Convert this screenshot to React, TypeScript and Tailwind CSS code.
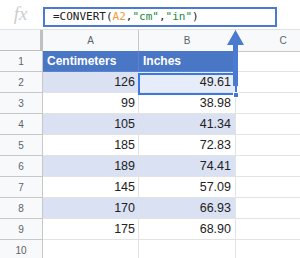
import React from "react";

const rows: [string, string][] = [
  ["126", "49.61"],
  ["99", "38.98"],
  ["105", "41.34"],
  ["185", "72.83"],
  ["189", "74.41"],
  ["145", "57.09"],
  ["170", "66.93"],
  ["175", "68.90"],
];

function RowHead({n}: { n: number | string }) {
  return (
    <div className="flex items-center justify-center bg-[#f8f9fa] border-r border-b border-[#c7c7c7] text-[10px] text-[#5f6368]">
      {n}
    </div>
  );
}

export default function App() {
  return (
    <div className="relative w-[300px] h-[258px] overflow-hidden bg-white" style={{fontFamily: '"Liberation Sans", Arial, sans-serif'}}>
      {/* formula bar */}
      <div className="flex h-[30px] border-b border-[#e0e0e0]">
        <div className="w-[43px] shrink-0 flex items-center justify-center">
          <span className="italic text-[19px] text-[#cdcdcd] pr-[2px]" style={{fontFamily: '"Liberation Serif", serif'}}>fx</span>
        </div>
        <div className="mt-[7px] h-[20px] w-[234px] shrink-0 border-2 border-[#4a7bd0] flex items-center pl-[8px] text-[11px] text-[#222]" style={{fontFamily: '"DejaVu Sans Mono", monospace'}}>
          <span>=CONVERT(</span>
          <span className="text-[#f09c3a]">A2</span>
          <span>,</span>
          <span className="text-[#168a3a]">"cm"</span>
          <span>,</span>
          <span className="text-[#168a3a]">"in"</span>
          <span>)</span>
        </div>
      </div>

      {/* sheet */}
      <div className="grid w-[330px] grid-cols-[43px_96px_97px_94px] auto-rows-[21px] text-[#222]">
        <div className="h-[22px] bg-[#f8f9fa] border-r-[3px] border-b-[2px] border-[#c0c0c0]" />
        <div className="h-[22px] flex items-center justify-center bg-[#f8f9fa] border-r border-b border-[#c7c7c7] text-[10px] text-[#5f6368]">A</div>
        <div className="h-[22px] flex items-center justify-center bg-[#f8f9fa] border-r border-b border-[#c7c7c7] text-[10px] text-[#5f6368]">B</div>
        <div className="h-[22px] flex items-center justify-center bg-[#f8f9fa] border-b border-[#c7c7c7] text-[10px] text-[#5f6368]">C</div>

        <RowHead n={1} />
        <div className="flex items-center pl-[4px] bg-[#4a76c6] border-r border-b border-[#5b84cc] text-white font-bold text-[12px]">Centimeters</div>
        <div className="flex items-center pl-[4px] bg-[#4a76c6] border-r border-b border-[#5b84cc] text-white font-bold text-[12px]">Inches</div>
        <div className="border-b border-[#e2e3e3]" />

        {rows.map(([a, b], i) => {
          const band = i % 2 === 0 ? "bg-[#d9e1f2]" : "bg-white";
          const bBand = i === 0 ? "bg-[#e6ecf8]" : band;
          return (
            <React.Fragment key={i}>
              <RowHead n={i + 2} />
              <div className={`flex items-center justify-end pr-[3px] text-[12.5px] border-r border-b border-[#e2e3e3] ${band}`}>{a}</div>
              <div className={`flex items-center justify-end pr-[4px] text-[12.5px] border-r border-b border-[#e2e3e3] ${bBand}`}>{b}</div>
              <div className="border-b border-[#e2e3e3]" />
            </React.Fragment>
          );
        })}

        <RowHead n={10} />
        <div className="border-r border-b border-[#e2e3e3]" />
        <div className="border-r border-b border-[#e2e3e3]" />
        <div className="border-b border-[#e2e3e3]" />
      </div>

      {/* selection on B2 */}
      <div className="absolute left-[138px] top-[73px] w-[99px] h-[22px] border-2 border-[#3b78e7]" />
      <div className="absolute left-[233px] top-[92px] w-[6px] h-[6px] bg-[#3b78e7] border border-white" />

      {/* arrow */}
      <svg className="absolute left-[226px] top-[28px]" width="20" height="62" viewBox="0 0 20 62">
        <path d="M9.5 2 L18 17 L12 17 L12 58 L7 58 L7 17 L1 17 Z" fill="#4a7bd0" />
      </svg>
    </div>
  );
}
